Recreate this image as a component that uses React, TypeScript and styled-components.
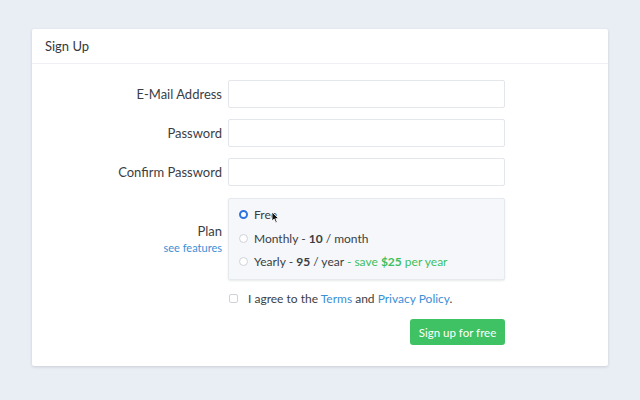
import styled, { createGlobalStyle } from "styled-components";

const GlobalStyle = createGlobalStyle`
  body {
    margin: 0;
    background: #e9edf4;
    font-family: "Lato", "Open Sans", sans-serif;
    color: #3a3e44;
  }
`;

const Page = styled.div`
  padding: 29px 32px;
`;

const Card = styled.div`
  position: relative;
  width: 576px;
  background: #ffffff;
  border-radius: 2px;
  box-shadow: 0 1px 3px rgba(60, 70, 90, 0.18);
`;

const CardHeader = styled.div`
  height: 34px;
  display: flex;
  align-items: center;
  padding-left: 13px;
  font-size: 13px;
  color: #34383d;
  border-bottom: 1px solid #eef0f3;
`;

const CardBody = styled.div`
  display: grid;
  grid-template-columns: 190px 277px;
  column-gap: 6px;
  row-gap: 11px;
  padding: 16px 0 21px;
`;

const Label = styled.label`
  justify-self: end;
  align-self: center;
  font-size: 13px;
  color: #3a3e44;
`;

const PlanLabel = styled.div`
  justify-self: end;
  align-self: center;
  display: flex;
  flex-direction: column;
  align-items: flex-end;
  gap: 2px;
  font-size: 13px;
`;

const SmallLink = styled.a`
  font-size: 11px;
  color: #3b8fd6;
  text-decoration: none;
`;

const Input = styled.input`
  box-sizing: border-box;
  width: 277px;
  height: 28px;
  border: 1px solid #e3e6ea;
  border-radius: 2px;
  background: #fff;
  outline: none;
`;

const PlanBox = styled.div`
  margin-top: 1px;
  padding: 4px 10px;
  background: #f6f7fa;
  border: 1px solid #e6e9ee;
  border-radius: 2px;
  box-shadow: 0 1px 2px rgba(60, 70, 90, 0.12);
  box-sizing: border-box;
  height: 82px;
  display: flex;
  flex-direction: column;
`;

const RadioRow = styled.label`
  height: 23.5px;
  display: flex;
  align-items: center;
  gap: 6px;
  font-size: 12px;
  color: #3a3e44;
  b {
    font-weight: 700;
  }
`;

const RadioDot = styled.span<{ $checked?: boolean }>`
  box-sizing: border-box;
  width: 9px;
  height: 9px;
  border-radius: 50%;
  background: #fff;
  border: ${(p) => (p.$checked ? "2.5px solid #2f73e0" : "1px solid #cfd3d8")};
`;

const Save = styled.span`
  color: #3dbf5f;
  b {
    font-weight: 700;
  }
`;

const CheckRow = styled.div`
  grid-column: 2;
  display: flex;
  align-items: center;
  gap: 10px;
  height: 20px;
  margin-top: -3px;
  font-size: 12px;
  color: #3a3e44;
`;

const CheckBox = styled.span`
  box-sizing: border-box;
  width: 9px;
  height: 9px;
  margin-left: 1px;
  border: 1px solid #cfd3d8;
  border-radius: 2px;
  background: #fff;
`;

const Link = styled.a`
  color: #3b8fd6;
  text-decoration: none;
`;

const SubmitButton = styled.button`
  grid-column: 2;
  justify-self: end;
  width: 95px;
  height: 26px;
  border: none;
  border-radius: 3px;
  background: #3ec264;
  color: #ffffff;
  font-family: inherit;
  font-size: 11.5px;
  cursor: pointer;
`;

const Cursor = styled.svg`
  position: absolute;
  left: 239px;
  top: 182px;
  width: 9px;
  height: 13px;
`;

const App = () => {
  return (
    <Page>
      <GlobalStyle />
      <Card>
        <CardHeader>Sign Up</CardHeader>
        <CardBody>
          <Label>E-Mail Address</Label>
          <Input type="email" />
          <Label>Password</Label>
          <Input type="password" />
          <Label>Confirm Password</Label>
          <Input type="password" />
          <PlanLabel>
            <span>Plan</span>
            <SmallLink>see features</SmallLink>
          </PlanLabel>
          <PlanBox>
            <RadioRow>
              <RadioDot $checked />
              Free
            </RadioRow>
            <RadioRow>
              <RadioDot />
              <span>
                Monthly - <b>10</b> / month
              </span>
            </RadioRow>
            <RadioRow>
              <RadioDot />
              <span>
                Yearly - <b>95</b> / year <Save>- save <b>$25</b> per year</Save>
              </span>
            </RadioRow>
          </PlanBox>
          <CheckRow>
            <CheckBox />
            <span>
              I agree to the <Link>Terms</Link> and <Link>Privacy Policy</Link>.
            </span>
          </CheckRow>
          <SubmitButton>Sign up for free</SubmitButton>
        </CardBody>
        <Cursor viewBox="0 0 9 13">
          <path d="M1 1 L1 10 L3.2 8 L4.8 11.8 L6.2 11.2 L4.7 7.6 L7.6 7.6 Z" fill="#111" stroke="#fff" strokeWidth="0.8" />
        </Cursor>
      </Card>
    </Page>
  );
};

export default App;
